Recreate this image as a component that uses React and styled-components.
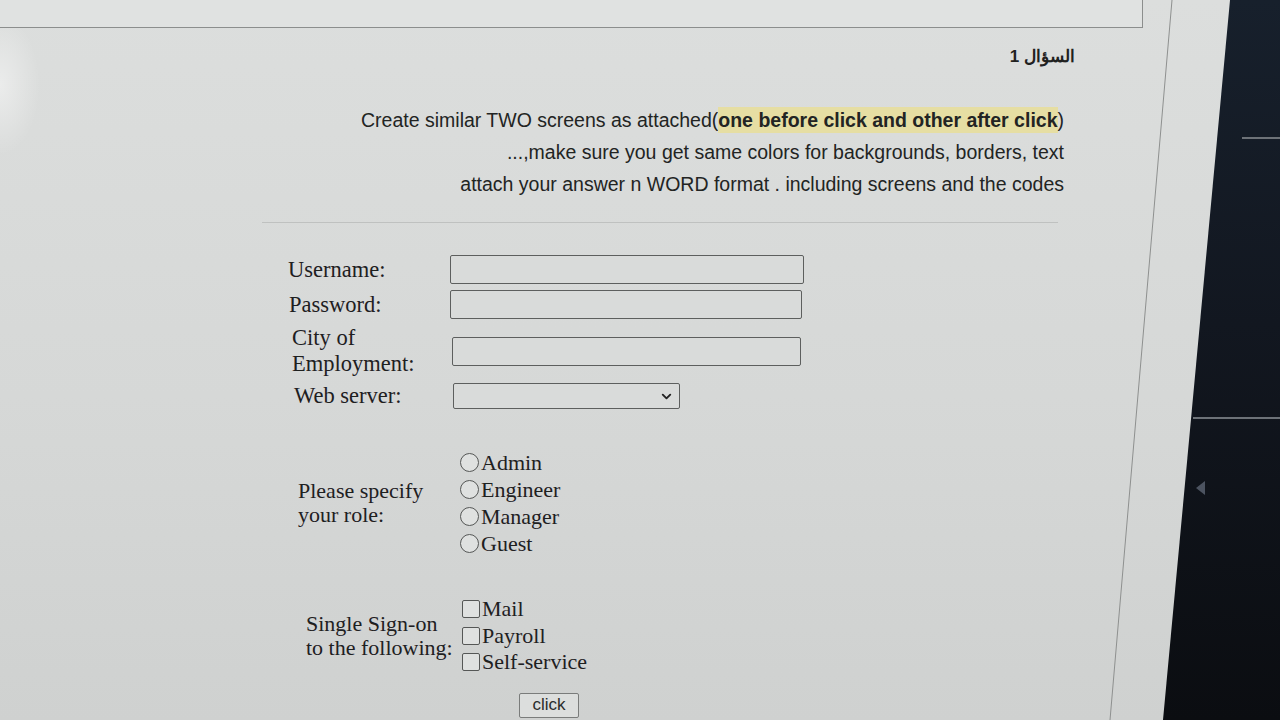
import React from 'react';
import styled, { createGlobalStyle } from 'styled-components';
import { ChevronDown } from 'lucide-react';

const GlobalStyle = createGlobalStyle`
  html, body {
    margin: 0;
    padding: 0;
    width: 1280px;
    height: 720px;
    overflow: hidden;
  }
  body {
    font-family: "Liberation Serif", "Times New Roman", serif;
    color: #1f2120;
  }
`;

const Page = styled.div`
  position: relative;
  width: 1280px;
  height: 720px;
  display: flex;
  overflow: hidden;
  background:
    radial-gradient(ellipse 40px 70px at 0px 85px, rgba(255, 255, 255, 0.45), rgba(255, 255, 255, 0) 100%),
    linear-gradient(180deg, #dcdedd 0%, #d6d8d7 55%, #cfd1d0 100%);
`;

const Main = styled.div`
  flex: 1;
  display: flex;
  flex-direction: column;
`;

const TopStrip = styled.div`
  width: 1142px;
  height: 27px;
  flex-shrink: 0;
  background: #e0e2e1;
  border-bottom: 1px solid #8c8e8d;
  border-right: 1px solid #8c8e8d;
`;

const Content = styled.div`
  margin-left: 262px;
  width: 813px;
  display: flex;
  flex-direction: column;
`;

const QuestionTitle = styled.div`
  margin-top: 17px;
  text-align: right;
  font-family: "Liberation Sans", "Noto Sans", Arial, sans-serif;
  font-weight: bold;
  font-size: 17px;
  line-height: 24px;
  direction: rtl;
`;

const Instructions = styled.div`
  margin-top: 35px;
  padding-right: 11px;
  text-align: right;
  font-family: "Liberation Sans", Arial, sans-serif;
  font-size: 19.5px;
  line-height: 32px;
  color: #222423;
  white-space: nowrap;
`;

const Highlight = styled.span`
  background: #e6dea3;
  font-weight: bold;
  padding: 2px 0;
`;

const Rule = styled.hr`
  margin: 22px 17px 0 0;
  border: none;
  border-top: 1px solid #bfc1c0;
  height: 0;
`;

const Form = styled.form`
  margin: 32px 0 0 26px;
  display: grid;
  grid-template-columns: 162px auto;
  align-items: center;
  row-gap: 6px;
`;

const Label = styled.label`
  font-size: 22.5px;
  line-height: 26px;
  padding-left: ${(p) => p.$indent || 0}px;
  color: #1e201f;
  white-space: nowrap;
`;

const TextField = styled.input`
  box-sizing: border-box;
  width: ${(p) => p.$width || 354}px;
  height: 29px;
  margin-left: ${(p) => p.$indent || 0}px;
  border: 1px solid #5d5f5e;
  border-radius: 2px;
  background: #d9dbda;
  outline: none;
`;

const SelectWrap = styled.div`
  position: relative;
  width: 227px;
  height: 26px;
  margin-left: 3px;
`;

const Select = styled.select`
  appearance: none;
  box-sizing: border-box;
  width: 100%;
  height: 100%;
  border: 1px solid #5d5f5e;
  border-radius: 2px;
  background: #d9dbda;
  outline: none;
`;

const SelectArrow = styled(ChevronDown)`
  position: absolute;
  right: 6px;
  top: 6px;
  pointer-events: none;
`;

const Group = styled.div`
  grid-column: 1 / -1;
  display: grid;
  grid-template-columns: 162px auto;
  align-items: center;
  margin-top: ${(p) => p.$top}px;
`;

const GroupLabel = styled.div`
  font-size: 22px;
  line-height: 24px;
  padding-left: ${(p) => p.$indent || 0}px;
  color: #1e201f;
  white-space: nowrap;
`;

const Options = styled.div`
  display: flex;
  flex-direction: column;
  padding-left: ${(p) => p.$indent || 0}px;
`;

const Option = styled.label`
  display: flex;
  align-items: center;
  height: ${(p) => p.$h || 27}px;
  font-size: 22px;
  color: #1e201f;
`;

const Radio = styled.input.attrs({ type: 'radio' })`
  appearance: none;
  box-sizing: border-box;
  width: 19px;
  height: 19px;
  margin: 0 2px 0 0;
  border: 1.5px solid #555756;
  border-radius: 50%;
  background: #dfe1e0;
`;

const Checkbox = styled.input.attrs({ type: 'checkbox' })`
  appearance: none;
  box-sizing: border-box;
  width: 18px;
  height: 18px;
  margin: 0 2px 0 0;
  border: 1.5px solid #555756;
  border-radius: 2px;
  background: #dfe1e0;
`;

const ButtonRow = styled.div`
  grid-column: 1 / -1;
  display: flex;
  justify-content: center;
  width: 522px;
  margin-top: 11px;
`;

const Button = styled.button`
  height: 25px;
  padding: 0 12px;
  font-family: "Liberation Sans", Arial, sans-serif;
  font-size: 17px;
  color: #2a2c2b;
  background: #dcdedd;
  border: 1px solid #7a7c7b;
  border-radius: 2px;
`;

const SidePanel = styled.div`
  position: relative;
  width: 117px;
  flex-shrink: 0;
  background: linear-gradient(180deg, #17202c 0%, #121720 45%, #0b0d11 100%);
  clip-path: polygon(67px 0, 100% 0, 100% 100%, 0 100%);
`;

const PanelLine = styled.div`
  position: absolute;
  top: ${(p) => p.$top}px;
  left: ${(p) => p.$left}px;
  right: 0;
  height: 2px;
  background: #6d7278;
`;

const PanelArrow = styled.div`
  position: absolute;
  top: 481px;
  left: 33px;
  width: 0;
  height: 0;
  border-top: 7px solid transparent;
  border-bottom: 7px solid transparent;
  border-right: 9px solid #4c5360;
`;

const Glare = styled.svg`
  position: absolute;
  inset: 0;
  pointer-events: none;
`;

export default function App() {
  return (
    <>
      <GlobalStyle />
      <Page>
        <Main>
          <TopStrip />
          <Content>
            <QuestionTitle>السؤال 1</QuestionTitle>
            <Instructions>
              <div>
                Create similar TWO screens as attached(
                <Highlight>one before click and other after click</Highlight>)
              </div>
              <div>...,make sure you get same colors for backgrounds, borders, text</div>
              <div>attach your answer n WORD format . including screens and the codes</div>
            </Instructions>
            <Rule />
            <Form onSubmit={(e) => e.preventDefault()}>
              <Label htmlFor="username">Username:</Label>
              <TextField id="username" />
              <Label htmlFor="password" $indent={1}>Password:</Label>
              <TextField id="password" type="password" $width={352} />
              <Label htmlFor="city" $indent={4}>
                City of
                <br />
                Employment:
              </Label>
              <TextField id="city" $width={349} $indent={2} />
              <Label htmlFor="server" $indent={6}>Web server:</Label>
              <SelectWrap>
                <Select id="server">
                  <option value=""></option>
                </Select>
                <SelectArrow size={15} strokeWidth={3} color="#222" />
              </SelectWrap>

              <Group $top={34}>
                <GroupLabel $indent={10}>
                  Please specify
                  <br />
                  your role:
                </GroupLabel>
                <Options $indent={10}>
                  <Option><Radio name="role" />Admin</Option>
                  <Option><Radio name="role" />Engineer</Option>
                  <Option><Radio name="role" />Manager</Option>
                  <Option><Radio name="role" />Guest</Option>
                </Options>
              </Group>

              <Group $top={33}>
                <GroupLabel $indent={18}>
                  Single Sign-on
                  <br />
                  to the following:
                </GroupLabel>
                <Options $indent={12}>
                  <Option $h={26.5}><Checkbox />Mail</Option>
                  <Option $h={26.5}><Checkbox />Payroll</Option>
                  <Option $h={26.5}><Checkbox />Self-service</Option>
                </Options>
              </Group>

              <ButtonRow>
                <Button type="button">click</Button>
              </ButtonRow>
            </Form>
          </Content>
        </Main>
        <SidePanel>
          <PanelLine $top={137} $left={79} />
          <PanelLine $top={417} $left={30} />
          <PanelArrow />
        </SidePanel>
        <Glare width="1280" height="720">
          <line x1="1172" y1="0" x2="1110" y2="720" stroke="#8e908f" strokeWidth="1" />
        </Glare>
      </Page>
    </>
  );
}
